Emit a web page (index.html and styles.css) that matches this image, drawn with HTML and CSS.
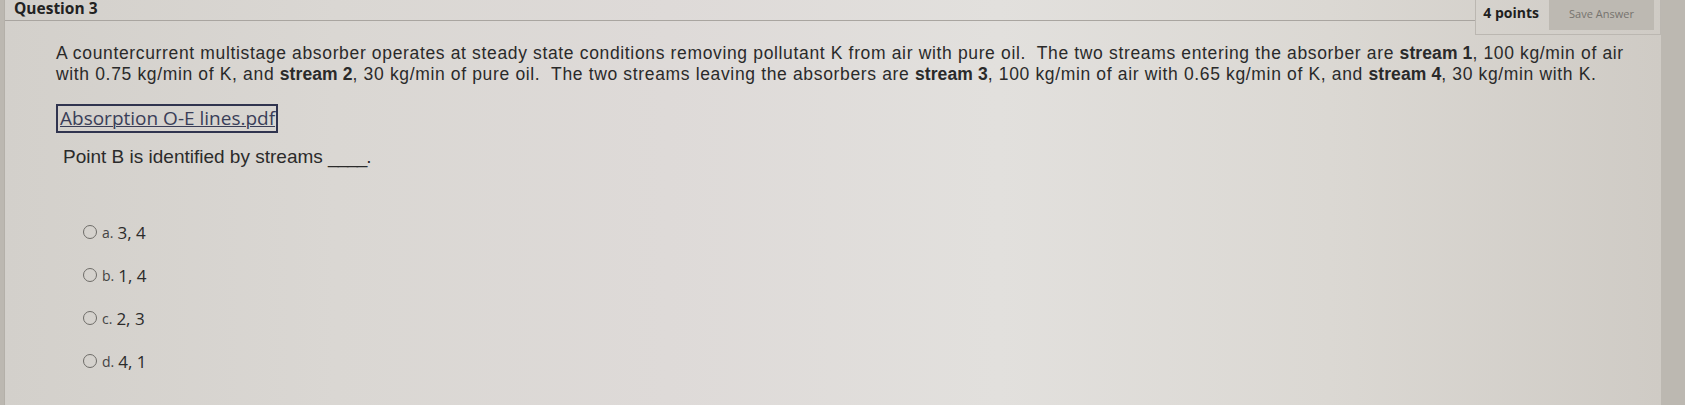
FILE: index.html
```html
<!DOCTYPE html>
<html lang="en">
<head>
    <meta charset="UTF-8">
    <meta name="viewport" content="width=device-width, initial-scale=1.0">
    <title>Question 3</title>
    <link rel="stylesheet" href="styles.css">
</head>
<body>
    <div class="page">
        <!-- Question header -->
        <div class="question-head">
            <h3 class="question-title">Question 3</h3>
            <div class="points-box">
                <span class="points">4 points</span>
                <button class="save-btn" type="button">Save Answer</button>
            </div>
        </div>

        <div class="question-body">
            <p class="stem">A countercurrent multistage absorber operates at steady state conditions removing pollutant K from air with pure oil.&nbsp; The two streams entering the absorber are <b>stream 1</b>, 100 kg/min of air<br>with 0.75 kg/min of K, and <b>stream 2</b>, 30 kg/min of pure oil.&nbsp; The two streams leaving the absorbers are <b>stream 3</b>, 100 kg/min of air with 0.65 kg/min of K, and <b>stream 4</b>, 30 kg/min with K.</p>

            <a class="file-link" href="#">Absorption O-E lines.pdf</a>

            <p class="prompt">Point B is identified by streams <span class="blank">____</span>.</p>

            <!-- Answer choices -->
            <ul class="choices">
                <li><label><input type="radio" name="q3"><span class="letter">a.</span>3, 4</label></li>
                <li><label><input type="radio" name="q3"><span class="letter">b.</span>1, 4</label></li>
                <li><label><input type="radio" name="q3"><span class="letter">c.</span>2, 3</label></li>
                <li><label><input type="radio" name="q3"><span class="letter">d.</span>4, 1</label></li>
            </ul>
        </div>
    </div>
</body>
</html>
```

FILE: styles.css
```css
body {
    margin: 0;
    height: 405px;
    background: #bcb8b1;
    font-family: 'Open Sans', sans-serif;
    color: #2b2b2b;
    overflow: hidden;
}
.page {
    margin: 0 24px 0 4px;
    height: 405px;
    border-left: 1px solid #b4b0a9;
    background: linear-gradient(90deg, #d3d0cb 0%, #dad7d3 20%, #dedad8 40%, #e2e0dd 60%, #dbd8d3 80%, #cfcbc5 100%);
}
.question-head {
    display: flex;
    align-items: flex-start;
}
.question-title {
    flex: 1;
    margin: 0;
    padding-left: 9px;
    height: 20px;
    line-height: 17px;
    font-size: 15.5px;
    font-weight: 700;
    color: #222;
    border-bottom: 1px solid #a9a5a0;
}
.points-box {
    display: flex;
    align-items: flex-start;
    height: 30px;
    padding: 0 6px 4px 7px;
    border: 1px solid #bbb7b1;
    border-top: none;
}
.points {
    font-size: 14px;
    font-weight: 700;
    line-height: 26px;
    color: #1f1f1f;
    padding-right: 10px;
}
.save-btn {
    width: 105px;
    height: 30px;
    border: none;
    background-color: #bdb9b2;
    color: #76736e;
    font-family: 'Open Sans', sans-serif;
    font-size: 11px;
    padding: 0 0 4px;
}
.question-body {
    padding-left: 51px;
}
.stem {
    margin: 8px 0 0;
    font-family: 'Liberation Sans', Arial, sans-serif;
    font-size: 17.5px;
    line-height: 21px;
    letter-spacing: 0.65px;
    color: #2a2a2a;
    max-width: 1600px;
}
.stem b {
    font-weight: 700;
    letter-spacing: 0.1px;
}
.file-link {
    display: inline-block;
    margin-top: 19px;
    padding: 1px 1px 2px 2px;
    border: 2px solid #30344f;
    color: #3a3e58;
    font-size: 19px;
    line-height: 22px;
    text-decoration: underline;
    text-decoration-thickness: 1px;
}
.prompt {
    margin: 13px 0 0 7px;
    font-family: 'Liberation Sans', Arial, sans-serif;
    font-size: 19px;
    line-height: 22px;
}
.blank {
    letter-spacing: -1px;
}
.choices {
    list-style: none;
    margin: 52px 0 0;
    padding: 0 0 0 27px;
}
.choices li {
    height: 24px;
    margin-bottom: 19px;
}
.choices label {
    display: flex;
    align-items: center;
    height: 24px;
    font-size: 17px;
}
.choices input {
    appearance: none;
    width: 14px;
    height: 14px;
    margin: 0 5px 0 0;
    border: 1.5px solid #6e6c68;
    border-radius: 50%;
    background: transparent;
}
.letter {
    font-size: 14px;
    color: #444;
    margin-right: 4px;
}
```
